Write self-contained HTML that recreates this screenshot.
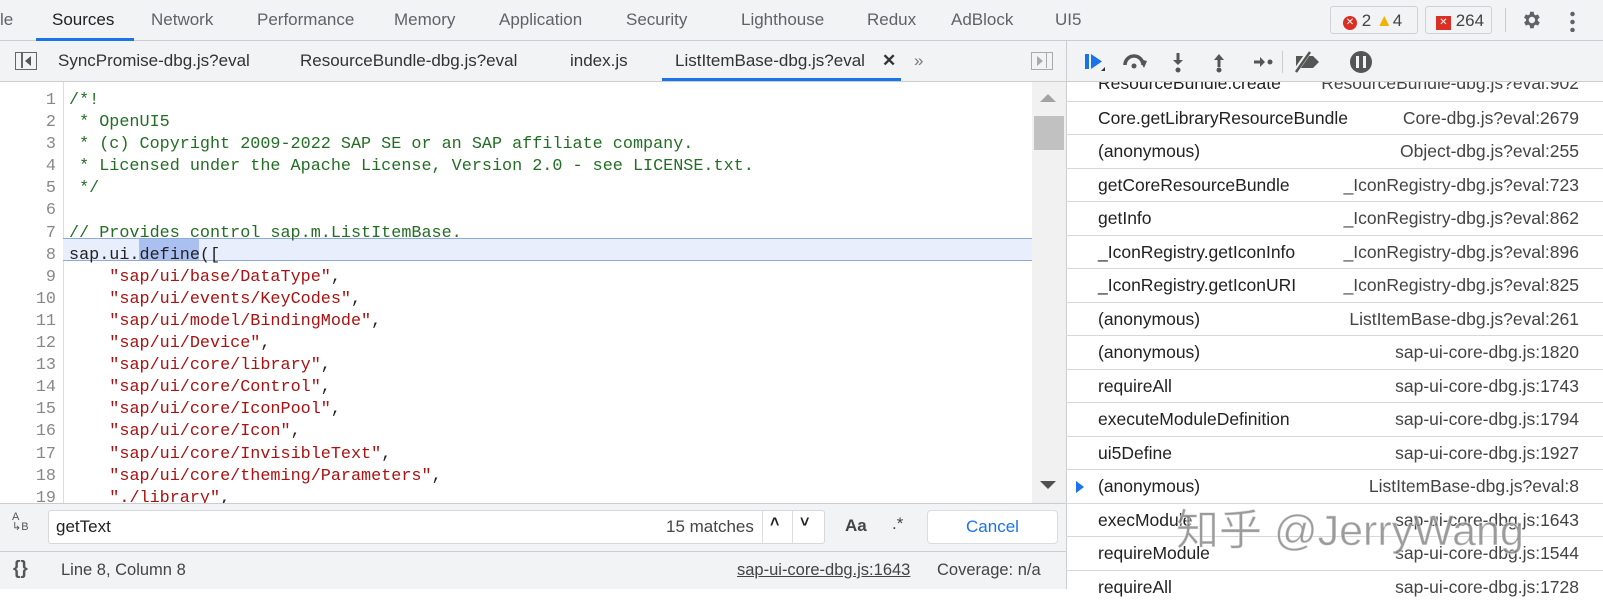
<!DOCTYPE html>
<html><head><meta charset="utf-8"><style>
*{box-sizing:border-box;margin:0;padding:0}
body{width:1603px;height:589px;overflow:hidden;background:#fff;font-family:"Liberation Sans",sans-serif;color:#333;position:relative}
.a{position:absolute;white-space:nowrap}
.tb{top:0;left:0;width:1603px;height:41px;background:#f1f3f4;border-bottom:1px solid #cbcdd1}
.t{font-size:17px;color:#5f6368;top:10px}
.ft{top:41px;left:0;width:1066px;height:41px;background:#f1f3f4;border-bottom:1px solid #cbcdd1}
.f{font-size:17px;color:#333;top:51px}
.code{font-family:"Liberation Mono",monospace;font-size:16.8px;line-height:22.1px}
.ln{left:0;width:56px;text-align:right;color:#888}
.c{color:#236e25}.s{color:#a11}
.rp{left:1066px;top:41px;width:537px;height:548px;border-left:1px solid #cbcdd1}
.row{left:1066px;width:537px;height:33.5px;border-bottom:1px solid #d6d8db;font-size:17.5px;color:#222}
.row span{position:absolute;top:6px}
.row .l{left:32px}.row .r{right:24px;color:#444}
</style></head><body>
<div class="a tb"></div>
<div class="a t" style="left:0">le</div>
<div class="a t" style="left:52px;color:#202124">Sources</div>
<div class="a" style="left:36px;top:38px;width:98px;height:3px;background:#1a73e8"></div>
<div class="a t" style="left:151px">Network</div>
<div class="a t" style="left:257px">Performance</div>
<div class="a t" style="left:394px">Memory</div>
<div class="a t" style="left:499px">Application</div>
<div class="a t" style="left:626px">Security</div>
<div class="a t" style="left:741px">Lighthouse</div>
<div class="a t" style="left:867px">Redux</div>
<div class="a t" style="left:951px">AdBlock</div>
<div class="a t" style="left:1055px">UI5</div>
<div class="a" style="left:1330px;top:6px;width:88px;height:28px;border:1px solid #d0d2d6;border-radius:3px;font-size:17px;color:#444;padding:4px 0 0 12px"><span style="display:inline-block;width:14px;height:14px;border-radius:7px;background:#d93025;color:#fff;font-size:10px;text-align:center;line-height:14px;vertical-align:1px">✕</span> 2 <span style="color:#f0b400">▲</span>4</div>
<div class="a" style="left:1425px;top:6px;width:67px;height:28px;border:1px solid #d0d2d6;border-radius:3px;font-size:17px;color:#444;padding:4px 0 0 10px"><span style="display:inline-block;width:15px;height:14px;background:#d93025;color:#fff;font-size:10px;text-align:center;line-height:14px;vertical-align:1px">✕</span> 264</div>
<div class="a" style="left:1505px;top:8px;width:1px;height:24px;background:#ccc"></div>
<svg class="a" style="left:1520px;top:9px" width="22" height="22" viewBox="0 0 24 24"><path fill="#5f6368" d="M19.4 13a7.5 7.5 0 000-2l2.1-1.6-2-3.5-2.5 1a7 7 0 00-1.7-1L15 3h-4l-.4 2.9a7 7 0 00-1.7 1l-2.5-1-2 3.5L6.6 11a7.5 7.5 0 000 2l-2.1 1.6 2 3.5 2.5-1a7 7 0 001.7 1L11 21h4l.4-2.9a7 7 0 001.7-1l2.5 1 2-3.5zM13 15.5a3.5 3.5 0 110-7 3.5 3.5 0 010 7z"/></svg>
<div class="a" style="left:1570px;top:10px;width:5px;height:22px;background:radial-gradient(circle,#5f6368 2px,transparent 2.5px) 0 0/5px 8px"></div>

<div class="a ft"></div>
<div class="a" style="left:15px;top:52px;width:22px;height:18px;border:1.5px solid #666"><div style="position:absolute;left:5px;top:0;width:1.5px;height:15px;background:#666"></div><div style="position:absolute;left:9px;top:3px;border:5px solid transparent;border-right:6px solid #555;border-left:0"></div></div>
<div class="a f" style="left:58px">SyncPromise-dbg.js?eval</div>
<div class="a f" style="left:300px">ResourceBundle-dbg.js?eval</div>
<div class="a f" style="left:570px">index.js</div>
<div class="a f" style="left:675px">ListItemBase-dbg.js?eval</div>
<div class="a f" style="left:882px;font-weight:bold">✕</div>
<div class="a f" style="left:914px;color:#777">»</div>
<div class="a" style="left:662px;top:78px;width:239px;height:3px;background:#1a73e8"></div>
<div class="a" style="left:1031px;top:52px;width:22px;height:18px;border:1.5px solid #aaa"><div style="position:absolute;right:5px;top:0;width:1.5px;height:15px;background:#aaa"></div><div style="position:absolute;left:5px;top:3px;border:5px solid transparent;border-left:6px solid #aaa;border-right:0"></div></div>

<!-- code -->
<div class="a" style="left:63px;top:82px;width:1px;height:421px;background:#ddd"></div>
<div class="a" style="left:63px;top:238px;width:969px;height:23px;background:#e8eefb;border-top:1px solid #8fa9d8;border-bottom:1px solid #8fa9d8"></div>
<div class="a" style="left:139px;top:239px;width:60px;height:21px;background:#aac0f0"></div>
<div class="a code ln" style="top:90px">1<br>2<br>3<br>4<br>5<br>6<br>7<br>8<br>9<br>10<br>11<br>12<br>13<br>14<br>15<br>16<br>17<br>18<br>19</div>
<div class="a code" style="left:69px;top:90px;white-space:pre;color:#222"><span class="c">/*!
 * OpenUI5
 * (c) Copyright 2009-2022 SAP SE or an SAP affiliate company.
 * Licensed under the Apache License, Version 2.0 - see LICENSE.txt.
 */

// Provides control sap.m.ListItemBase.</span>
sap.ui.define([
    <span class="s">"sap/ui/base/DataType"</span>,
    <span class="s">"sap/ui/events/KeyCodes"</span>,
    <span class="s">"sap/ui/model/BindingMode"</span>,
    <span class="s">"sap/ui/Device"</span>,
    <span class="s">"sap/ui/core/library"</span>,
    <span class="s">"sap/ui/core/Control"</span>,
    <span class="s">"sap/ui/core/IconPool"</span>,
    <span class="s">"sap/ui/core/Icon"</span>,
    <span class="s">"sap/ui/core/InvisibleText"</span>,
    <span class="s">"sap/ui/core/theming/Parameters"</span>,
    <span class="s">"./library"</span>,</div>
<div class="a" style="left:1032px;top:82px;width:34px;height:421px;background:#f1f1f1"></div>
<div class="a" style="left:1040px;top:94px;border:8px solid transparent;border-bottom:8px solid #a3a3a3;border-top:0"></div>
<div class="a" style="left:1034px;top:116px;width:30px;height:34px;background:#c1c1c1"></div>
<div class="a" style="left:1040px;top:481px;border:8px solid transparent;border-top:8px solid #505050;border-bottom:0"></div>

<!-- search -->
<div class="a" style="left:0;top:503px;width:1066px;height:49px;background:#f1f3f4;border-top:1px solid #cbcdd1;border-bottom:1px solid #cbcdd1"></div>
<div class="a" style="left:12px;top:512px;font-size:11px;color:#555;line-height:10px">A<br>&#8627;B</div>
<div class="a" style="left:48px;top:510px;width:777px;height:34px;background:#fff;border:1px solid #d6d8db;border-radius:3px"></div>
<div class="a" style="left:56px;top:517px;font-size:17px;color:#222">getText</div>
<div class="a" style="left:666px;top:517px;font-size:17px;color:#444">15 matches</div>
<div class="a" style="left:762px;top:511px;width:1px;height:32px;background:#ddd"></div>
<div class="a" style="left:792px;top:511px;width:1px;height:32px;background:#ddd"></div>
<div class="a" style="left:770px;top:514px;font-size:16px;font-weight:bold;color:#222">&#708;</div>
<div class="a" style="left:800px;top:514px;font-size:16px;font-weight:bold;color:#222">&#709;</div>
<div class="a" style="left:845px;top:516px;font-size:17px;font-weight:bold;color:#444">Aa</div>
<div class="a" style="left:892px;top:514px;font-size:17px;color:#444">.*</div>
<div class="a" style="left:927px;top:510px;width:131px;height:34px;background:#fff;border:1px solid #dadce0;border-radius:4px;text-align:center;font-size:17px;color:#1a73e8;line-height:32px">Cancel</div>
<!-- status -->
<div class="a" style="left:0;top:552px;width:1066px;height:37px;background:#f1f3f4"></div>
<div class="a" style="left:13px;top:558px;font-size:19px;font-weight:bold;color:#555">{}</div>
<div class="a" style="left:61px;top:561px;font-size:16.5px;color:#444">Line 8, Column 8</div>
<div class="a" style="left:737px;top:561px;font-size:16.5px;color:#444;text-decoration:underline">sap-ui-core-dbg.js:1643</div>
<div class="a" style="left:937px;top:561px;font-size:16.5px;color:#444">Coverage: n/a</div>

<!-- right pane -->
<div class="a rp"></div>
<div class="a" style="left:1066px;top:41px;width:537px;height:41px;background:#f1f3f4;border-bottom:1px solid #cbcdd1;border-left:1px solid #cbcdd1"></div>
<svg class="a" style="left:1083px;top:48px" width="310" height="28" viewBox="0 0 310 28">
<rect x="2" y="6" width="4" height="15" fill="#1a73e8"/><path d="M8 6l11 7.5L8 21z" fill="#1a73e8"/><path d="M18 23l4-4v4z" fill="#333"/>
<path d="M42 17a9 9 0 0118 0" stroke="#555" stroke-width="3.5" fill="none"/><path d="M56 11l8 2-3 7z" fill="#555"/><circle cx="51" cy="18" r="2.5" fill="#555"/>
<path d="M95 5v9" stroke="#555" stroke-width="3"/><path d="M90 12h10l-5 5z" fill="#555"/><circle cx="95" cy="22" r="2.5" fill="#555"/>
<path d="M136 10v9" stroke="#555" stroke-width="3"/><path d="M131 12h10l-5-6z" fill="#555"/><circle cx="136" cy="22" r="2.5" fill="#555"/>
<path d="M171 14h8" stroke="#555" stroke-width="3"/><path d="M177 9l5 5-5 5z" fill="#555"/><circle cx="187" cy="14" r="2.5" fill="#555"/>
<rect x="199" y="3" width="1" height="22" fill="#ccc"/>
<path d="M213 8h17l6 6-6 6h-17z" fill="#555"/><path d="M212 24l14-20" stroke="#f1f3f4" stroke-width="5"/><path d="M213 24l14-20" stroke="#555" stroke-width="2.5"/>
<circle cx="278" cy="14" r="11" fill="#555"/><rect x="273" y="8" width="3" height="12" fill="#f1f3f4"/><rect x="280" y="8" width="3" height="12" fill="#f1f3f4"/>
</svg>
<div class="a row" style="top:82px;height:19.5px;overflow:hidden"><span class="l" style="top:-9px">ResourceBundle.create</span><span class="r" style="top:-9px">ResourceBundle-dbg.js?eval:902</span></div>
<div class="a row" style="top:101.5px"><span class="l">Core.getLibraryResourceBundle</span><span class="r">Core-dbg.js?eval:2679</span></div>
<div class="a row" style="top:135px"><span class="l">(anonymous)</span><span class="r">Object-dbg.js?eval:255</span></div>
<div class="a row" style="top:168.5px"><span class="l">getCoreResourceBundle</span><span class="r">_IconRegistry-dbg.js?eval:723</span></div>
<div class="a row" style="top:202px"><span class="l">getInfo</span><span class="r">_IconRegistry-dbg.js?eval:862</span></div>
<div class="a row" style="top:235.5px"><span class="l">_IconRegistry.getIconInfo</span><span class="r">_IconRegistry-dbg.js?eval:896</span></div>
<div class="a row" style="top:269px"><span class="l">_IconRegistry.getIconURI</span><span class="r">_IconRegistry-dbg.js?eval:825</span></div>
<div class="a row" style="top:302.5px"><span class="l">(anonymous)</span><span class="r">ListItemBase-dbg.js?eval:261</span></div>
<div class="a row" style="top:336px"><span class="l">(anonymous)</span><span class="r">sap-ui-core-dbg.js:1820</span></div>
<div class="a row" style="top:369.5px"><span class="l">requireAll</span><span class="r">sap-ui-core-dbg.js:1743</span></div>
<div class="a row" style="top:403px"><span class="l">executeModuleDefinition</span><span class="r">sap-ui-core-dbg.js:1794</span></div>
<div class="a row" style="top:436.5px"><span class="l">ui5Define</span><span class="r">sap-ui-core-dbg.js:1927</span></div>
<div class="a row" style="top:470px"><span style="left:10px;top:11px;width:0;height:0;border:6px solid transparent;border-left:8px solid #1a73e8;border-right:0"></span><span class="l">(anonymous)</span><span class="r">ListItemBase-dbg.js?eval:8</span></div>
<div class="a row" style="top:503.5px"><span class="l">execModule</span><span class="r">sap-ui-core-dbg.js:1643</span></div>
<div class="a row" style="top:537px"><span class="l">requireModule</span><span class="r">sap-ui-core-dbg.js:1544</span></div>
<div class="a row" style="top:570.5px;border:0"><span class="l">requireAll</span><span class="r">sap-ui-core-dbg.js:1728</span></div>
<div class="a" style="left:1176px;top:496px;font-family:'Liberation Sans','Noto Sans CJK SC',sans-serif;font-size:43px;color:rgba(130,130,130,0.8);-webkit-text-stroke:1px rgba(255,255,255,0.6)">知乎 @JerryWang</div>
</body></html>
